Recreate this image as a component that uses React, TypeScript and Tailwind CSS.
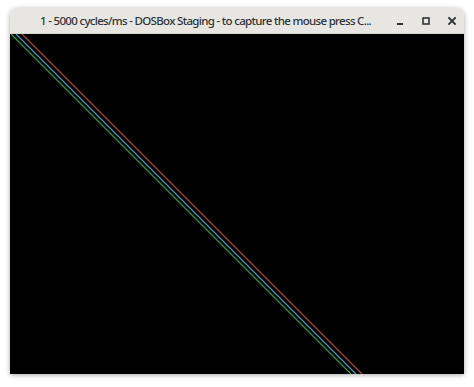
import React from 'react';

function TitleButtons() {
  return (
    <div className="flex shrink-0 items-center gap-[10px] pr-[4px]">
      {/* minimize */}
      <div className="w-[16px] h-[16px] flex items-center justify-center">
        <svg width="16" height="16" viewBox="0 0 16 16">
          <rect x="5" y="10" width="6" height="2" fill="#2e3436" />
        </svg>
      </div>
      {/* maximize */}
      <div className="w-[16px] h-[16px] flex items-center justify-center">
        <svg width="16" height="16" viewBox="0 0 16 16">
          <rect x="5" y="5" width="6" height="6" fill="none" stroke="#2e3436" strokeWidth="1.6" />
        </svg>
      </div>
      {/* close */}
      <div className="w-[16px] h-[16px] flex items-center justify-center">
        <svg width="16" height="16" viewBox="0 0 16 16">
          <path d="M5 5 L11 11 M11 5 L5 11" stroke="#2e3436" strokeWidth="1.8" strokeLinecap="square" />
        </svg>
      </div>
    </div>
  );
}

function Screen() {
  // lines are y = x in 640x480 game space, scaled into 454x340
  return (
    <div className="h-[340px] bg-black">
      <svg width="454" height="340" viewBox="0 0 454 340" className="block">
        <line x1="1" y1="0" x2="341" y2="340" stroke="#3a9552" strokeWidth="1.3" />
        <line x1="6" y1="0" x2="346" y2="340" stroke="#4798aa" strokeWidth="1.3" />
        <line x1="12" y1="0" x2="352" y2="340" stroke="#a8434a" strokeWidth="1.3" />
      </svg>
    </div>
  );
}

export default function App() {
  return (
    <div className="w-[474px] h-[387px] bg-white pt-[8px] pl-[10px]">
      <div className="w-[454px] rounded-t-[8px] overflow-hidden shadow-[0_1px_5px_rgba(0,0,0,0.35)]">
        <div className="h-[26px] bg-[#e8e6e3] border-b border-[#d3d0cc] flex items-center pl-[30px]">
          <span
            className="flex-1 text-[11.5px] font-medium text-[#2e3436] whitespace-nowrap tracking-[-0.68px] pt-[1px]"
            style={{ fontFamily: '"Noto Sans", "Open Sans", sans-serif' }}
          >
            1 - 5000 cycles/ms - DOSBox Staging - to capture the mouse press C...
          </span>
          <TitleButtons />
        </div>
        <Screen />
      </div>
    </div>
  );
}
